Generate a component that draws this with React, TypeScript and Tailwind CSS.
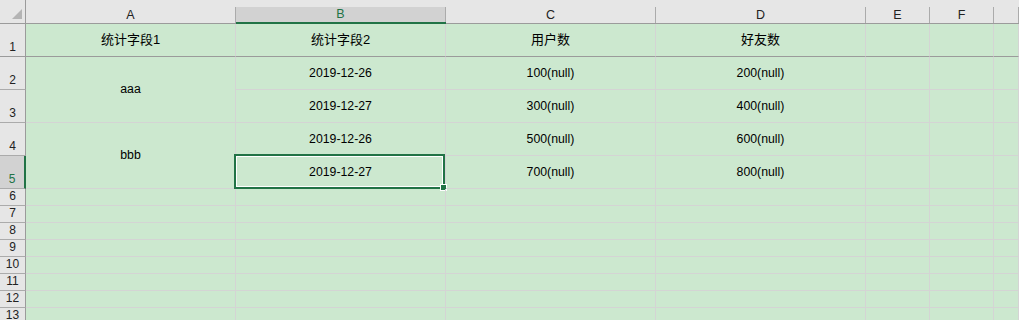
const columns = ["A", "B", "C", "D", "E", "F", ""];

type Row = {
  num: number;
  cells: (string | null)[];
  tall?: boolean;
};

// null = covered by the merged cell above
const rows: Row[] = [
  { num: 1, tall: true, cells: ["统计字段1", "统计字段2", "用户数", "好友数", "", "", ""] },
  { num: 2, tall: true, cells: ["aaa", "2019-12-26", "100(null)", "200(null)", "", "", ""] },
  { num: 3, tall: true, cells: [null, "2019-12-27", "300(null)", "400(null)", "", "", ""] },
  { num: 4, tall: true, cells: ["bbb", "2019-12-26", "500(null)", "600(null)", "", "", ""] },
  { num: 5, tall: true, cells: [null, "2019-12-27", "700(null)", "800(null)", "", "", ""] },
  ...[6, 7, 8, 9, 10, 11, 12, 13].map((n) => ({ num: n, cells: ["", "", "", "", "", "", ""] })),
];

function ColumnHeader({ label, active }: { label: string; active: boolean }) {
  return (
    <div
      className={
        active
          ? "flex flex-col bg-[#e6e6e6] border-b-2 border-[#217346]"
          : "flex flex-col bg-[#e6e6e6] border-b border-[#9b9b9b]"
      }
    >
      <div className="h-[7px] shrink-0" />
      <div
        className={
          active
            ? "flex-1 flex items-center justify-center bg-[#d2d2d2] border-r border-[#ababab] text-[12.5px] text-[#217346] leading-none"
            : "flex-1 flex items-center justify-center border-r border-[#ababab] text-[12.5px] text-[#222] leading-none"
        }
      >
        {label}
      </div>
    </div>
  );
}

export default function App() {
  return (
    <div className="w-[1019px] h-[320px] overflow-hidden bg-[#cce8cf] font-['Liberation_Sans','Noto_Sans_CJK_SC',sans-serif] text-black">
      <div className="grid grid-cols-[26px_210px_210px_210px_210px_64px_64px_1fr] grid-rows-[24px_33px_33px_33px_33px_33px_repeat(8,17px)]">
        {/* Corner */}
        <div className="relative bg-[#e6e6e6] border-r border-b border-[#9b9b9b]">
          <svg className="absolute inset-0" width="25" height="23">
            <polygon points="22,9 22,19 12,19" fill="#b4b4b4" />
          </svg>
        </div>

        {columns.map((c, i) => (
          <ColumnHeader key={i} label={c} active={c === "B"} />
        ))}

        {rows.map((row) => {
          const active = row.num === 5;
          const first = row.num === 1;
          return [
            <div
              key={`h${row.num}`}
              className={
                active
                  ? "flex items-end justify-center pb-[1px] bg-[#d2d2d2] border-r-2 border-r-[#217346] border-b border-b-[#ababab] text-[12px] leading-[15px] text-[#217346]"
                  : first
                    ? "flex items-end justify-center pb-[1px] bg-[#e6e6e6] border-r border-r-[#9b9b9b] border-b border-b-[#9b9b9b] text-[12px] leading-[15px] text-[#222]"
                    : "flex items-end justify-center pb-[1px] bg-[#e6e6e6] border-r border-r-[#9b9b9b] border-b border-b-[#ababab] text-[12px] leading-[15px] text-[#222]"
              }
            >
              {row.num}
            </div>,
            ...row.cells.map((text, ci) => {
              if (text === null) return null;
              const merged = ci === 0 && (row.num === 2 || row.num === 4);
              const selected = row.num === 5 && ci === 1;
              return (
                <div
                  key={`${row.num}-${ci}`}
                  className={[
                    "relative flex items-center justify-center border-r border-b border-r-[#d4d4d4]",
                    first ? "border-b-[#9b9b9b] text-[13px]" : "border-b-[#d4d4d4] text-[12.3px]",
                    merged ? "row-span-2" : "",
                  ].join(" ")}
                >
                  {text}
                  {selected && (
                    <div className="absolute -left-[2px] -top-[2px] right-0 -bottom-[1px] border-2 border-[#217346] shadow-[inset_0_0_0_1px_#ffffff]">
                      <div className="absolute -right-[4px] -bottom-[4px] w-[7px] h-[7px] bg-[#217346] border border-white" />
                    </div>
                  )}
                </div>
              );
            }),
          ];
        })}
      </div>
    </div>
  );
}
